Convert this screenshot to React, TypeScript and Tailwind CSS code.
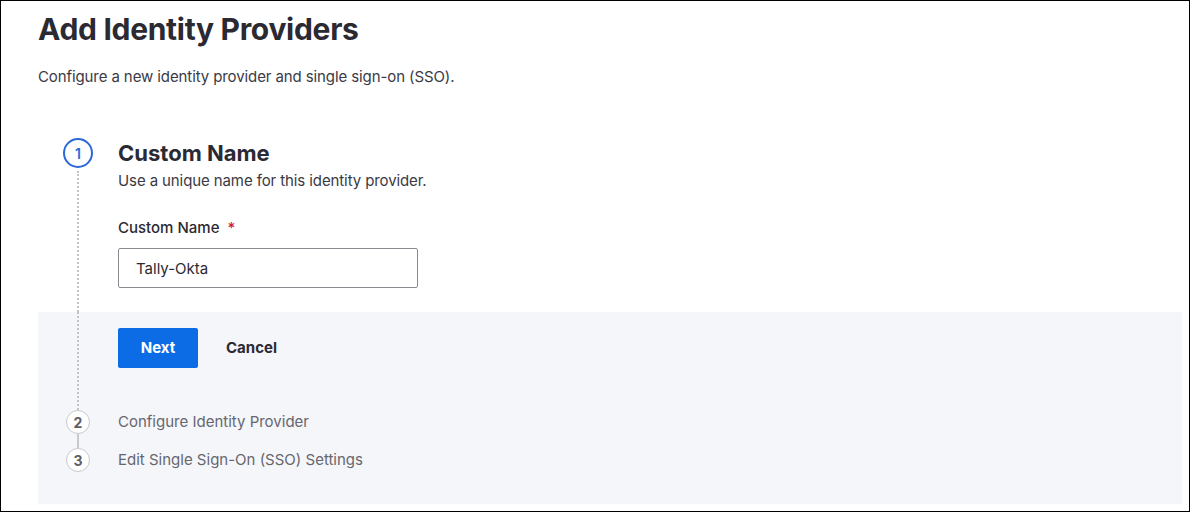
import React from 'react';

const font = { fontFamily: 'Inter, "Noto Sans", sans-serif' };

const App = () => {
  return (
    <div className="w-[1190px] h-[512px] border border-black bg-white text-[#2f2f35] overflow-hidden" style={font}>
      <header className="pl-[37px] pt-[9px]">
        <h1 className="text-[30px] font-bold leading-[38px] tracking-[-0.3px] text-[#2b2a33]">Add Identity Providers</h1>
        <p className="mt-[19px] text-[15px] leading-[20px] tracking-[-0.1px] text-[#3a3a44]">
          Configure a new identity provider and single sign-on (SSO).
        </p>
      </header>

      <div className="ml-[37px] mr-[7px] mt-[51px]">
        {/* Step 1 - active */}
        <div className="flex">
          <div className="w-[80px] flex flex-col items-center shrink-0">
            <div className="w-[30px] h-[30px] rounded-full border-2 border-[#2b67d6] flex items-center justify-center text-[14px] font-semibold text-[#2b67d6]">
              1
            </div>
            <div className="flex-1 border-l-2 border-dotted border-[#c4c4c8] mt-[3px]" />
          </div>
          <div className="pt-[1px] pb-[24px]">
            <h2 className="text-[22px] font-bold leading-[28px] text-[#2b2a33]">Custom Name</h2>
            <p className="mt-[4px] text-[15px] leading-[20px] tracking-[-0.1px] text-[#3a3a44]">Use a unique name for this identity provider.</p>
            <label className="block mt-[27px] text-[15px] font-medium leading-[20px] text-[#2b2a33]">
              Custom Name <span className="text-[#d1173f] ml-[4px]">*</span>
            </label>
            <input
              type="text"
              defaultValue="Tally-Okta"
              className="mt-[10px] block w-[300px] h-[40px] px-[17px] border border-[#8a8a90] rounded-[2px] text-[15px] text-[#2b2a33] outline-none"
              style={font}
            />
          </div>
        </div>

        {/* Actions + remaining steps */}
        <div className="bg-[#f5f6fa] pb-[32px]">
          <div className="flex">
            <div className="w-[80px] flex justify-center shrink-0">
              <div className="border-l-2 border-dotted border-[#c4c4c8]" />
            </div>
            <div className="flex items-center gap-[28px] pt-[16px] pb-[42px]">
              <button className="h-[40px] w-[80px] rounded-[2px] bg-[#0b6ce6] text-white text-[15px] font-bold" style={font}>
                Next
              </button>
              <button className="text-[15px] font-bold text-[#2b2a33]" style={font}>
                Cancel
              </button>
            </div>
          </div>

          <div className="flex items-center">
            <div className="w-[80px] flex justify-center shrink-0">
              <div className="w-[24px] h-[24px] rounded-full border border-[#c9c9cd] bg-white flex items-center justify-center text-[14px] font-bold text-[#5e5e66]">
                2
              </div>
            </div>
            <span className="text-[15px] text-[#66666e]">Configure Identity Provider</span>
          </div>
          <div className="flex">
            <div className="w-[80px] flex justify-center shrink-0 h-[14px]">
              <div className="border-l-2 border-[#c9c9cd]" />
            </div>
          </div>
          <div className="flex items-center">
            <div className="w-[80px] flex justify-center shrink-0">
              <div className="w-[24px] h-[24px] rounded-full border border-[#c9c9cd] bg-white flex items-center justify-center text-[14px] font-bold text-[#5e5e66]">
                3
              </div>
            </div>
            <span className="text-[15px] text-[#66666e]">Edit Single Sign-On (SSO) Settings</span>
          </div>
        </div>
      </div>
    </div>
  );
};

export default App;
